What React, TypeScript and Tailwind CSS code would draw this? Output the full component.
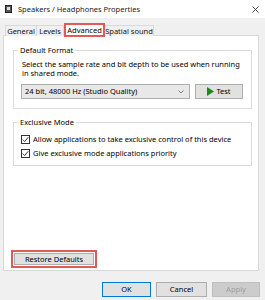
import React from 'react';

const tabs = [
  { label: 'General', w: 'w-[32px]' },
  { label: 'Levels', w: 'w-[28px]' },
];

function Checkbox({ label }: { label: string }) {
  return (
    <div className="flex items-center h-[10px]">
      <span className="w-[9px] h-[9px] border border-[#333] bg-white flex items-center justify-center mr-[3px]">
        <svg width="7" height="7" viewBox="0 0 7 7">
          <path d="M0.8 3.6 L2.7 5.5 L6.3 1.2" fill="none" stroke="#222" strokeWidth="0.9" />
        </svg>
      </span>
      <span className="whitespace-nowrap">{label}</span>
    </div>
  );
}

export default function App() {
  return (
    <div className="w-[265px] h-[300px] bg-[#f0f0f0] flex flex-col text-[7.5px] leading-[9px] text-black font-['Noto_Sans',sans-serif]">
      {/* title bar */}
      <div className="h-[18px] bg-white flex items-center pl-[5px] pr-[6px] shrink-0">
        <svg width="7" height="8" viewBox="0 0 7 8" className="mr-[6px]">
          <rect x="0.5" y="0.5" width="6" height="7" fill="#555" stroke="#222" />
          <rect x="2" y="2" width="3" height="3" fill="#ddd" />
        </svg>
        <span className="text-[7.5px] text-[#1a1a1a]">Speakers / Headphones Properties</span>
        <svg width="7" height="7" viewBox="0 0 7 7" className="ml-auto">
          <path d="M0.5 0.5 L6.5 6.5 M6.5 0.5 L0.5 6.5" stroke="#333" strokeWidth="0.9" />
        </svg>
      </div>

      <div className="pl-[3px] pr-[6px] pt-[5px] flex flex-col">
        {/* tabs */}
        <div className="flex items-end h-[13px] pl-[2px] relative z-10 whitespace-nowrap">
          {tabs.map((t) => (
            <div
              key={t.label}
              className={`${t.w} h-[11px] border border-b-0 border-[#d9d9d9] -ml-px first:ml-0 bg-[#f0f0f0] flex items-center justify-center text-[#111]`}
            >
              {t.label}
            </div>
          ))}
          <div className="w-[41px] h-[14px] border-2 border-[#e05a5a] bg-white flex items-center justify-center -mb-px">
            Advanced
          </div>
          <div className="w-[49px] h-[11px] border border-b-0 border-l-0 border-[#d9d9d9] bg-[#f0f0f0] flex items-center justify-center text-[#111]">
            Spatial sound
          </div>
        </div>

        {/* panel */}
        <div className="h-[236px] border border-[#d9d9d9] bg-white -mt-px flex flex-col pl-[9px] pr-[6px]">
          <div className="relative mt-[14px] border border-[#dcdcdc] pt-[9px] pb-[9px] pl-[7px] pr-[6px]">
            <span className="absolute -top-[6px] left-[4px] bg-white px-[2px] leading-[11px]">Default Format</span>
            <p className="pl-px leading-[8.5px]">
              Select the sample rate and bit depth to be used when running in shared mode.
            </p>
            <div className="flex mt-[7px] gap-[5px]">
              <div className="w-[169px] h-[15px] border border-[#adadad] bg-[#e8e8e8] flex items-center pl-[3px] pr-[5px] whitespace-nowrap">
                <span>24 bit, 48000 Hz (Studio Quality)</span>
                <svg width="6" height="4" viewBox="0 0 6 4" className="ml-auto">
                  <path d="M0.5 0.5 L3 3 L5.5 0.5" fill="none" stroke="#666" strokeWidth="0.8" />
                </svg>
              </div>
              <div className="w-[48px] h-[15px] border border-[#adadad] bg-[#e1e1e1] flex items-center justify-center gap-[2px]">
                <svg width="7" height="9" viewBox="0 0 7 9">
                  <path d="M0 0 L7 4.5 L0 9 Z" fill="#1e8a1e" />
                </svg>
                <span>Test</span>
              </div>
            </div>
          </div>

          <div className="relative mt-[13px] border border-[#dcdcdc] pt-[11px] pb-[7px] pl-[7px] flex flex-col gap-[4px]">
            <span className="absolute -top-[6px] left-[4px] bg-white px-[2px] leading-[11px]">Exclusive Mode</span>
            <Checkbox label="Allow applications to take exclusive control of this device" />
            <Checkbox label="Give exclusive mode applications priority" />
          </div>

          <div className="mt-auto mb-[2px] -ml-[2px] w-[86px] h-[18px] border-2 border-[#e05a5a] p-px flex">
            <div className="flex-1 border border-[#adadad] bg-[#e1e1e1] flex items-center justify-center whitespace-nowrap">
              Restore Defaults
            </div>
          </div>
        </div>
      </div>

      {/* bottom buttons */}
      <div className="flex justify-end gap-[5px] pr-[5px] mt-[11px]">
        <div className="w-[49px] h-[15px] border border-[#0078d7] bg-[#e1e1e1] flex items-center justify-center">OK</div>
        <div className="w-[51px] h-[15px] border border-[#adadad] bg-[#e1e1e1] flex items-center justify-center">Cancel</div>
        <div className="w-[48px] h-[15px] border border-[#bfbfbf] bg-[#cccccc] text-[#a0a0a0] flex items-center justify-center">Apply</div>
      </div>
    </div>
  );
}
